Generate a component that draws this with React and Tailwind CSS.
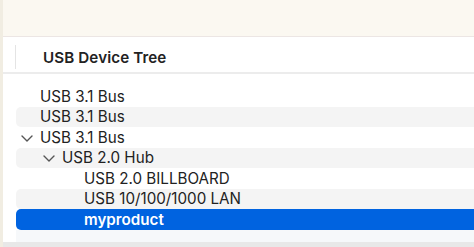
import React from 'react';

const rows = [
  { label: 'USB 3.1 Bus', level: 0 },
  { label: 'USB 3.1 Bus', level: 0 },
  { label: 'USB 3.1 Bus', level: 0, open: true },
  { label: 'USB 2.0 Hub', level: 1, open: true },
  { label: 'USB 2.0 BILLBOARD', level: 2 },
  { label: 'USB 10/100/1000 LAN', level: 2 },
  { label: 'myproduct', level: 2, selected: true },
];

const indent = ['pl-[24px]', 'pl-[46px]', 'pl-[68px]'];

function Chevron() {
  return (
    <svg width="12" height="7" viewBox="0 0 12 7" className="mr-[5px]">
      <path d="M1 1l5 5L11 1" fill="none" stroke="#555" strokeWidth="1.4" strokeLinecap="round" strokeLinejoin="round" />
    </svg>
  );
}

export default function App() {
  return (
    <div
      className="w-[474px] h-[247px] overflow-hidden flex bg-white text-[#222]"
      style={{ fontFamily: 'Inter, "Noto Sans", sans-serif' }}
    >
      <div className="w-[3px] bg-[#f1ede2] shrink-0" />
      <div className="flex-1 flex flex-col">
        <div className="h-[37px] bg-[#fbf8f1] border-b border-[#ece6e4] shrink-0" />
        <div className="h-[37px] flex items-center border-b-2 border-[#ececec] shrink-0">
          <div className="w-px h-[24px] bg-[#e4e4e4] ml-[12px] mt-[4px]" />
          <span className="ml-[27px] mt-[7px] text-[15.2px] font-semibold tracking-[0.1px]">USB Device Tree</span>
        </div>
        <div className="pt-[12px] flex flex-col">
          {rows.map((r, i) => (
            <div
              key={i}
              className={
                'h-[20.5px] pt-[1.5px] ml-[13px] rounded-l-[5px] flex items-center text-[15.2px] ' +
                indent[r.level] +
                (r.selected
                  ? ' bg-[#0063e0] text-white font-semibold'
                  : i % 2 === 1
                  ? ' bg-[#f4f4f4]'
                  : '')
              }
            >
              {r.open && <span className="-ml-[19px] flex"><Chevron /></span>}
              <span className={r.open ? 'ml-[2px]' : ''}>{r.label}</span>
            </div>
          ))}
          <div className="h-[12px] ml-[13px] bg-[#f6f8fa]" />
        </div>
        <div className="flex-1 bg-[#e8e8e8]" />
      </div>
    </div>
  );
}
